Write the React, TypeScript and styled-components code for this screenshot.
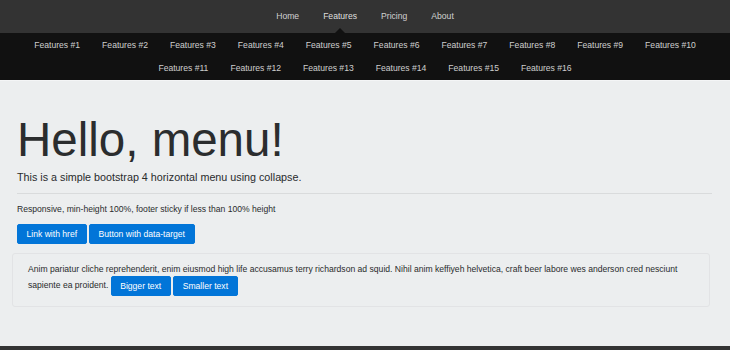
import styled, { createGlobalStyle, css } from "styled-components";

const GlobalStyle = createGlobalStyle`
  html, body {
    margin: 0;
    padding: 0;
  }
  body {
    font-family: "Liberation Sans", Arial, sans-serif;
    font-size: 8.6px;
    line-height: 1.5;
    color: #292b2c;
    background: #eceeef;
  }
  * {
    box-sizing: border-box;
  }
`;

const TOP_LINKS = ["Home", "Features", "Pricing", "About"];
const FEATURES = Array.from({ length: 16 }, (_, i) => `Features #${i + 1}`);

const App = () => {
  return (
    <>
      <GlobalStyle />
      <Page>
        <TopNav>
          {TOP_LINKS.map((label) => (
            <TopLink key={label} href="#" $active={label === "Features"}>
              {label}
            </TopLink>
          ))}
        </TopNav>
        <SubNav>
          {FEATURES.map((label) => (
            <SubLink key={label} href="#">
              {label}
            </SubLink>
          ))}
        </SubNav>

        <Main>
          <Heading>Hello, menu!</Heading>
          <Lead>This is a simple bootstrap 4 horizontal menu using collapse.</Lead>
          <Divider />
          <Text>Responsive, min-height 100%, footer sticky if less than 100% height</Text>
          <Text>
            <Button as="a" href="#">
              Link with href
            </Button>{" "}
            <Button type="button">Button with data-target</Button>
          </Text>
          <Well>
            Anim pariatur cliche reprehenderit, enim eiusmod high life accusamus
            terry richardson ad squid. Nihil anim keffiyeh helvetica, craft beer
            labore wes anderson cred nesciunt sapiente ea proident.{" "}
            <Button type="button">Bigger text</Button>{" "}
            <Button type="button">Smaller text</Button>
          </Well>
        </Main>

        <Footer />
      </Page>
    </>
  );
};

export default App;

const Page = styled.div`
  display: flex;
  flex-direction: column;
  min-height: 100vh;
`;

const TopNav = styled.nav`
  display: flex;
  justify-content: center;
  background: #333333;
  height: 33px;
`;

const TopLink = styled.a<{ $active?: boolean }>`
  position: relative;
  padding: 10px 12px;
  line-height: 13px;
  color: rgba(255, 255, 255, 0.78);
  text-decoration: none;

  ${({ $active }) =>
    $active &&
    css`
      color: rgba(255, 255, 255, 0.85);

      &:after {
        content: "";
        position: absolute;
        left: 50%;
        bottom: 0;
        margin-left: -5px;
        border: 5px solid transparent;
        border-top: 0;
        border-bottom-color: #111111;
      }
    `}
`;

const SubNav = styled.nav`
  display: flex;
  flex-wrap: wrap;
  justify-content: center;
  background: #111111;
  padding-top: 1px;
  border-bottom: 1px solid #f4f5f6;
`;

const SubLink = styled.a`
  padding: 5px 11px;
  line-height: 13px;
  color: rgba(255, 255, 255, 0.8);
  text-decoration: none;
  white-space: nowrap;
`;

const Main = styled.main`
  flex: 1;
  padding: 30px 18px 0 17px;
`;

const Heading = styled.h1`
  margin: 0 0 1px;
  font-size: 47.5px;
  font-weight: 400;
  line-height: 1.2;
  color: #2b2d2e;
`;

const Lead = styled.p`
  margin: 0;
  font-size: 10.75px;
  line-height: 1.5;
`;

const Divider = styled.hr`
  margin: 8px 0 8.6px;
  border: 0;
  border-top: 1px solid rgba(0, 0, 0, 0.08);
`;

const Text = styled.p`
  margin: 0 0 8.6px;
`;

const Button = styled.button`
  display: inline-block;
  vertical-align: middle;
  padding: 2.5px 8.5px;
  font-family: inherit;
  font-size: 8.6px;
  line-height: 12.9px;
  color: #ffffff;
  background: #0275d8;
  border: 1px solid #0275d8;
  border-radius: 2px;
  text-decoration: none;
  cursor: pointer;
`;

const Well = styled.div`
  margin: 0 2px 0 -5px;
  padding: 9.5px 15px;
  border: 1px solid #e2e3e5;
  border-radius: 3px;
`;

const Footer = styled.footer`
  height: 4px;
  background: #333333;
`;
